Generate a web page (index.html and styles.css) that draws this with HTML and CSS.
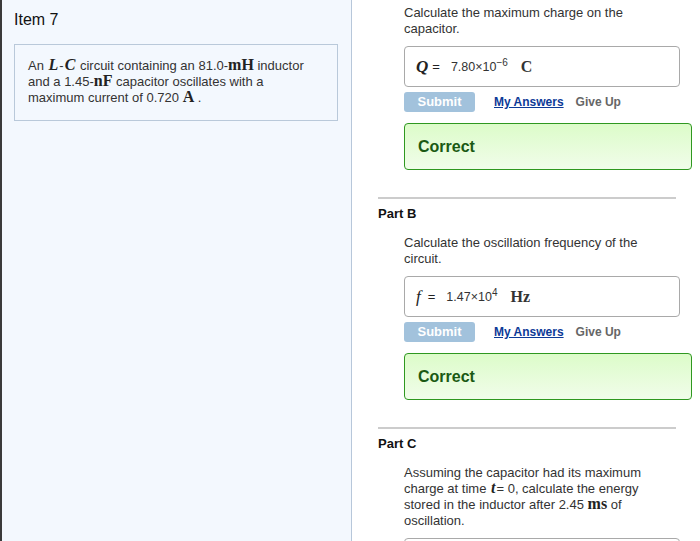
FILE: index.html
```html
<!DOCTYPE html>
<html>
<head>
<meta charset="utf-8">
<link rel="stylesheet" href="styles.css">
</head>
<body>
<div class="page">
  <aside class="item-panel">
    <h1 class="item-title">Item 7</h1>
    <div class="problem">
      An <span class="mi">L</span>-<span class="mi">C</span> circuit containing an 81.0-<span class="mu">mH</span> inductor and a 1.45-<span class="mu">nF</span> capacitor oscillates with a maximum current of 0.720 <span class="mu">A</span> .
    </div>
  </aside>
  <main class="parts">
    <section class="part part-first">
      <p class="prompt">Calculate the maximum charge on the capacitor.</p>
      <div class="answer-box"><span class="var">Q</span><span class="eq">=</span><span class="val">7.80×10<sup>−6</sup></span><span class="unit">C</span></div>
      <div class="actions"><span class="btn-submit">Submit</span><a class="link-answers">My Answers</a><span class="give-up">Give Up</span></div>
      <div class="feedback">Correct</div>
    </section>
    <section class="part">
      <div class="sep"></div>
      <h2 class="part-title">Part B</h2>
      <p class="prompt">Calculate the oscillation frequency of the circuit.</p>
      <div class="answer-box"><span class="var var-f">f</span><span class="eq">=</span><span class="val">1.47×10<sup>4</sup></span><span class="unit">Hz</span></div>
      <div class="actions"><span class="btn-submit">Submit</span><a class="link-answers">My Answers</a><span class="give-up">Give Up</span></div>
      <div class="feedback">Correct</div>
    </section>
    <section class="part">
      <div class="sep"></div>
      <h2 class="part-title">Part C</h2>
      <p class="prompt">Assuming the capacitor had its maximum charge at time <span class="mi">t</span>= 0, calculate the energy stored in the inductor after 2.45 <span class="mu">ms</span> of oscillation.</p>
      <div class="answer-box"></div>
    </section>
  </main>
</div>
</body>
</html>
```
FILE: styles.css
```css
html, body {
  margin: 0;
  padding: 0;
  background: #ffffff;
}
body {
  font-family: "Liberation Sans", Arial, sans-serif;
  font-size: 13px;
  color: #333333;
  height: 541px;
  overflow: hidden;
}
.page {
  display: flex;
  height: 541px;
}
.item-panel {
  box-sizing: border-box;
  width: 352px;
  flex: none;
  background: #f3f8fe;
  border-left: 2px solid #3a3a3a;
  border-right: 1px solid #b7c7da;
  padding: 0 13px 0 12px;
}
.item-title {
  margin: 0;
  padding-top: 11px;
  font-size: 16px;
  font-weight: normal;
  line-height: 18px;
  color: #111111;
  height: 33px;
}
.problem {
  border: 1px solid #b9c9da;
  padding: 13px 24px 14px 13px;
  line-height: 16px;
  color: #333333;
}
.mi {
  font-family: "Liberation Serif", "Times New Roman", serif;
  font-style: italic;
  font-weight: bold;
  font-size: 16px;
  line-height: 14px;
  padding: 0 1px;
  color: #222;
}
.mu {
  font-family: "Liberation Serif", "Times New Roman", serif;
  font-weight: bold;
  font-size: 16px;
  line-height: 14px;
  color: #222;
}
.parts {
  flex: 1;
  padding: 0 0 0 26px;
}
.part {
  width: 314px;
}
.part-first {
  padding-top: 5px;
}
.sep {
  width: 298px;
  height: 2px;
  background: #cccccc;
  margin-top: 27px;
}
.part-title {
  margin: 7px 0 0 0;
  font-size: 13px;
  line-height: 16px;
  font-weight: bold;
  color: #111111;
}
.prompt {
  margin: 0 0 0 26px;
  width: 250px;
  line-height: 16px;
  color: #333333;
}
.part-title + .prompt {
  margin-top: 13px;
}
.answer-box {
  margin: 9px 0 0 26px;
  border: 1px solid #a9a9a9;
  border-radius: 4px;
  display: flex;
  align-items: center;
  padding-left: 11px;
  box-sizing: border-box;
  width: 276px;
  height: 41px;
}
.var {
  font-family: "Liberation Serif", "Times New Roman", serif;
  font-style: italic;
  font-weight: bold;
  font-size: 17px;
  color: #222;
}
.var-f {
  font-weight: normal;
  padding-right: 3px;
}
.eq {
  font-size: 13px;
  margin-left: 4px;
  color: #222;
}
.val {
  margin-left: 11px;
  font-size: 12.5px;
  color: #333;
}
.val sup {
  font-size: 10px;
  line-height: 0;
  vertical-align: 5px;
}
.unit {
  font-family: "Liberation Serif", "Times New Roman", serif;
  font-weight: bold;
  font-size: 16px;
  color: #333;
  margin-left: 13px;
}
.actions {
  margin: 5px 0 0 26px;
  display: flex;
  align-items: center;
  height: 20px;
}
.btn-submit {
  width: 71px;
  height: 20px;
  line-height: 20px;
  text-align: center;
  background: #a2c2dc;
  border-radius: 3px;
  color: #ffffff;
  font-weight: bold;
  font-size: 13px;
}
.link-answers {
  margin-left: 19px;
  color: #0d3a97;
  text-decoration: underline;
  font-weight: bold;
  font-size: 12px;
}
.give-up {
  margin-left: 12px;
  color: #666666;
  font-weight: bold;
  font-size: 12px;
}
.feedback {
  margin: 11px 0 0 26px;
  width: 288px;
  height: 47px;
  box-sizing: border-box;
  border: 1px solid #2f9820;
  border-radius: 4px;
  background: linear-gradient(#dcfcc9, #f1fdea);
  padding-left: 13px;
  display: flex;
  align-items: center;
  font-size: 16px;
  font-weight: bold;
  color: #1a5a14;
}
```
